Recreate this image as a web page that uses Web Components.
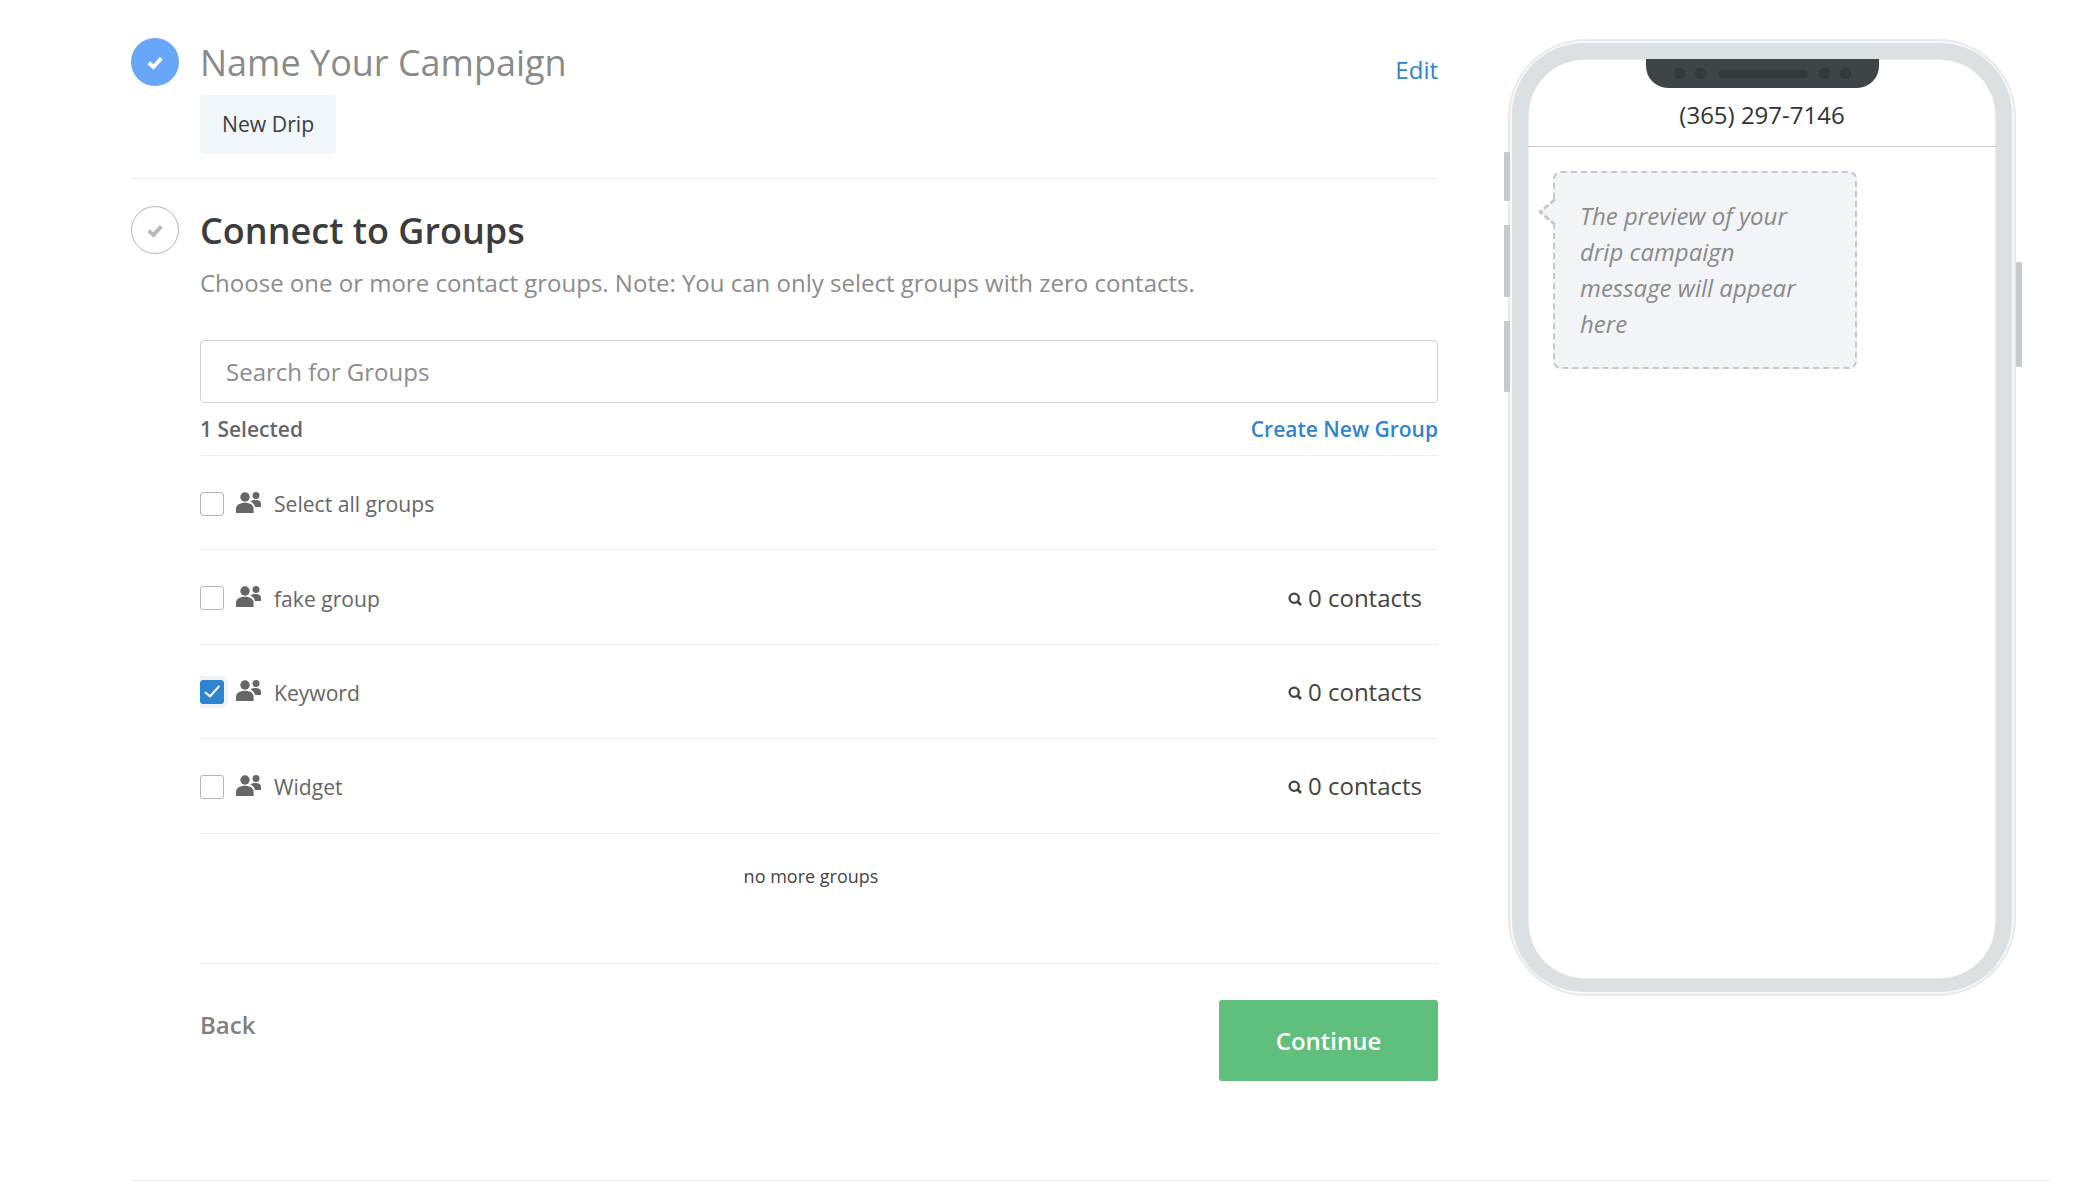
<!DOCTYPE html>
<html>
<head>
<meta charset="utf-8">
<title>New Drip</title>
<style>
    html, body { margin: 0; background: #fff; }
    body { font-family: "Open Sans", sans-serif; }
</style>
</head>
<body>
<drip-page>
    <drip-step slot="steps" state="done" heading="Name Your Campaign" link="Edit">
        <name-tag>New Drip</name-tag>
    </drip-step>
    <drip-step slot="steps" state="active" heading="Connect to Groups"
        note="Choose one or more contact groups. Note: You can only select groups with zero contacts.">
        <group-picker>
            <group-row label="Select all groups" all></group-row>
            <group-row label="fake group"></group-row>
            <group-row label="Keyword" checked></group-row>
            <group-row label="Widget"></group-row>
        </group-picker>
    </drip-step>
    <phone-preview slot="phone" number="(365) 297-7146"
        message="The preview of your drip campaign message will appear here"></phone-preview>
</drip-page>

<script>
const CHECK = /*html*/`<svg viewBox="-12 -12 24 24" width="24" height="24"><path d="M-6.3 .8L-1.5 5L6.3 -3.8" fill="none" stroke="currentColor" stroke-width="3.8"/></svg>`;

class DripPage extends HTMLElement {
    constructor() {
        super();
        this.attachShadow({ mode: 'open' }).innerHTML = /*html*/`
            <style>
                :host { display: block; height: 1190px; overflow: hidden; box-sizing: border-box; padding: 38px 0 0 131px; position: relative; }
                .columns { display: flex; gap: 70px; align-items: flex-start; }
                .steps { width: 1307px; flex: none; }
                .foot { width: 1920px; height: 1.5px; background: #eee; margin-top: 99px; }
                .phone { margin-top: 1px; }
            </style>
            <div class="columns">
                <div class="steps"><slot name="steps"></slot></div>
                <div class="phone"><slot name="phone"></slot></div>
            </div>
            <div class="foot"></div>
        `;
    }
}

class DripStep extends HTMLElement {
    constructor() {
        super();
        this.root = this.attachShadow({ mode: 'open' });
    }
    connectedCallback() {
        const done = this.getAttribute('state') === 'done';
        const note = this.getAttribute('note');
        const link = this.getAttribute('link');
        this.root.innerHTML = /*html*/`
            <style>
                :host { display: block; }
                .step { display: flex; gap: 21px; }
                .dot { width: 48px; height: 48px; border-radius: 50%; box-sizing: border-box; display: flex; align-items: center; justify-content: center; flex: none; }
                .done .dot { background: #68a6fa; color: #fff; }
                .active .dot { border: 1.5px solid #b5b5b5; color: #b8b8b8; }
                .main { flex: 1; min-width: 0; }
                .head { display: flex; justify-content: space-between; align-items: flex-start; }
                h2 { margin: 0; font-size: 36px; line-height: 50px; }
                .done h2 { font-weight: 400; color: #8a8a8a; }
                .active h2 { font-weight: 600; color: #3c3c3c; }
                a { color: #2f84cd; font-size: 24px; line-height: 32px; margin-top: 16px; }
                p { margin: 10px 0 0; color: #8c8c8c; font-size: 24px; line-height: 33px; }
                .done { padding-bottom: 24px; border-bottom: 1px solid #eee; margin-bottom: 27px; }
            </style>
            <section class="step ${done ? 'done' : 'active'}">
                <div class="dot">${CHECK}</div>
                <div class="main">
                    <div class="head"><h2>${this.getAttribute('heading')}</h2>${link ? `<a>${link}</a>` : ''}</div>
                    ${note ? `<p>${note}</p>` : ''}
                    <slot></slot>
                </div>
            </section>
        `;
    }
}

class NameTag extends HTMLElement {
    constructor() {
        super();
        this.attachShadow({ mode: 'open' }).innerHTML = /*html*/`
            <style>
                :host { display: table; margin-top: 7px; background: #f0f6f9; border-radius: 4px; padding: 0 22px 1px; color: #3c3c3c; font-size: 21.2px; line-height: 58px; }
            </style>
            <slot></slot>
        `;
    }
}

class GroupPicker extends HTMLElement {
    constructor() {
        super();
        this.attachShadow({ mode: 'open' }).innerHTML = /*html*/`
            <style>
                :host { display: block; }
                .search { display: block; margin-top: 41px; height: 63px; width: 100%; box-sizing: border-box; border: 1.5px solid #d0d0d0; border-radius: 4px; padding: 0 25px; font: 400 24px "Open Sans", sans-serif; color: #333; outline: none; }
                .search::placeholder { color: #8c8c8c; opacity: 1; }
                .bar { display: flex; justify-content: space-between; align-items: center; height: 53px; padding-bottom: 1px; border-bottom: 1.5px solid #eee; font-size: 21px; font-weight: 600; box-sizing: border-box; }
                .count { color: #666; }
                .create { color: #2f84cd; }
                .end { text-align: center; font-size: 18px; color: #444; padding: 22px 16px 0 0; line-height: 40px; height: 130px; box-sizing: border-box; border-bottom: 1.5px solid #eee; }
                .nav { display: flex; justify-content: space-between; align-items: flex-start; padding-top: 36px; }
                .back { font-size: 24px; font-weight: 600; color: #808080; line-height: 33px; margin-top: 8px; }
                button { width: 219px; height: 81px; background: #60bf7c; border: 0; border-radius: 3px; color: #fff; font: 600 24px "Open Sans", sans-serif; }
            </style>
            <input class="search" placeholder="Search for Groups">
            <div class="bar"><span class="count">1 Selected</span><span class="create">Create New Group</span></div>
            <slot></slot>
            <div class="end">no more groups</div>
            <div class="nav"><span class="back">Back</span><button>Continue</button></div>
        `;
    }
}

class GroupRow extends HTMLElement {
    constructor() {
        super();
        this.root = this.attachShadow({ mode: 'open' });
    }
    connectedCallback() {
        const checked = this.hasAttribute('checked');
        const all = this.hasAttribute('all');
        this.root.innerHTML = /*html*/`
            <style>
                :host { display: flex; align-items: center; height: 94.4px; box-sizing: border-box; padding-top: 2px; border-bottom: 1.5px solid #eee; color: #666; font-size: 21.1px; }
                .box { width: 24px; height: 24px; box-sizing: border-box; border: 1.5px solid #b4b4b4; border-radius: 3px; margin-right: 12px; flex: none; }
                .box.on { background: #2e84ce; border-color: #2e84ce; box-shadow: 0 0 0 4px #f1f1f1; clip-path: inset(-5px -5px -5px 0); }
                .box svg { display: block; margin: -1.5px; }
                .people { flex: none; margin: -3px 13px 0 0; }
                .name { flex: 1; }
                .count { color: #444; font-size: 24px; display: flex; align-items: center; gap: 6px; padding-right: 16px; margin-top: -2px; }
                .count svg { margin-top: 3px; }
            </style>
            <span class="box ${checked ? 'on' : ''}">${checked ? `<svg viewBox="0 0 24 24" width="24" height="24"><path d="M5 12.3L10 16.3L19.3 6" fill="none" stroke="#fff" stroke-width="2"/></svg>` : ''}</span>
            <svg class="people" viewBox="0 0 25 21" width="25" height="21" fill="#666">
                <circle cx="9" cy="5" r="4.7"/>
                <path d="M0 21V17C0 13 4 10.8 9 10.8C14 10.8 17.6 13 17.6 17V21Z"/>
                <circle cx="20" cy="3.6" r="3.5"/>
                <path d="M14.5 9.6C15.6 8.4 18 8 20 8C23 8 25 9.6 25 12V15H19C18.4 12.8 17 10.8 14.5 9.6Z"/>
            </svg>
            <span class="name">${this.getAttribute('label')}</span>
            ${all ? '' : `<span class="count"><svg viewBox="0 0 14 14" width="14" height="14"><circle cx="6.2" cy="6.2" r="4.6" fill="none" stroke="#444" stroke-width="2.3"/><path d="M9.5 9.5L13 13" stroke="#444" stroke-width="2.6"/></svg>0 contacts</span>`}
        `;
    }
}

class PhonePreview extends HTMLElement {
    constructor() {
        super();
        this.root = this.attachShadow({ mode: 'open' });
    }
    connectedCallback() {
        this.root.innerHTML = /*html*/`
            <style>
                :host { display: block; position: relative; width: 508px; height: 957px; }
                .shell { box-sizing: border-box; height: 100%; padding: 2px; border-radius: 78px; background: #f6f8f9; border: 2px solid #e6eaee; }
                .bezel { box-sizing: border-box; height: 100%; padding: 16px 16px 13px; border-radius: 72px; background: #dce0e3; }
                .screen { box-sizing: border-box; height: 100%; background: #fff; border-radius: 56px; box-shadow: inset 0 0 1.5px #999; overflow: hidden; display: flex; flex-direction: column; }
                .number { flex: none; height: 88px; box-sizing: border-box; padding-top: 39px; line-height: 33px; text-align: center; font-size: 24px; font-weight: 500; color: #333; border-bottom: 1.5px solid #c9cad0; }
                .bubble { position: relative; width: 304px; height: 198px; margin: 24px 0 0 25px; box-sizing: border-box; padding: 25px 25px 0; background: #f3f4f8; border: 2px dashed #c5c7cc; border-radius: 8px; color: #8a8a8a; font-style: italic; font-size: 24px; line-height: 36px; }
                .tail { position: absolute; left: -18px; top: 23px; }
                .notch { position: absolute; left: 138px; top: 20px; width: 233px; height: 29px; background: #3f4447; border-radius: 0 0 22px 22px; display: flex; align-items: center; justify-content: center; gap: 10px; }
                .notch i { width: 11px; height: 11px; border-radius: 50%; background: #363a3c; border: 1px solid #333; box-sizing: border-box; }
                .notch b { width: 90px; height: 8px; border-radius: 4px; background: #363a3c; margin: 0 1.5px; }
                .key { position: absolute; width: 6px; background: #c6cacd; border-radius: 1px; }
            </style>
            <div class="shell">
                <div class="bezel">
                    <div class="screen">
                        <div class="number">${this.getAttribute('number')}</div>
                        <div class="bubble">
                            <svg class="tail" width="19" height="32" viewBox="0 0 19 32"><path d="M19 2.5L3 16L19 29.5Z" fill="#f3f4f8"/><path d="M18 3.4L3 16L18 28.6" fill="none" stroke="#c5c7cc" stroke-width="2.8" stroke-dasharray="6 2.5"/></svg>
                            ${this.getAttribute('message')}
                        </div>
                    </div>
                </div>
            </div>
            <span class="key" style="left:-4px;top:113px;height:49px"></span>
            <span class="key" style="left:-4px;top:186px;height:72px"></span>
            <span class="key" style="left:-4px;top:282px;height:71px"></span>
            <span class="key" style="right:-6px;top:223px;height:105px"></span>
            <div class="notch"><i></i><i></i><b></b><i></i><i></i></div>
        `;
    }
}

customElements.define('drip-page', DripPage);
customElements.define('drip-step', DripStep);
customElements.define('name-tag', NameTag);
customElements.define('group-picker', GroupPicker);
customElements.define('group-row', GroupRow);
customElements.define('phone-preview', PhonePreview);
</script>
</body>
</html>
